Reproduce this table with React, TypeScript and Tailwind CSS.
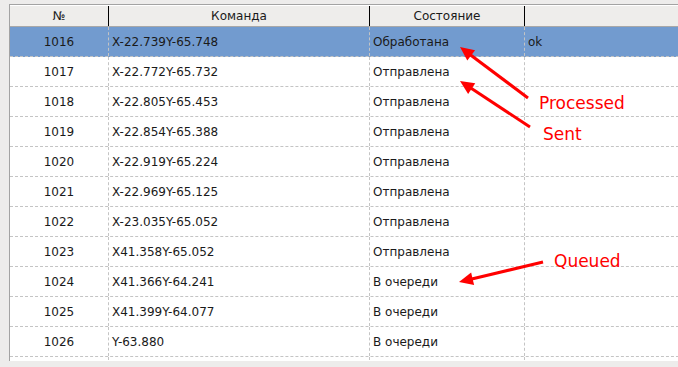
import React from "react";

const rows: [string, string, string, string][] = [
  ["1016", "X-22.739Y-65.748", "Обработана", "ok"],
  ["1017", "X-22.772Y-65.732", "Отправлена", ""],
  ["1018", "X-22.805Y-65.453", "Отправлена", ""],
  ["1019", "X-22.854Y-65.388", "Отправлена", ""],
  ["1020", "X-22.919Y-65.224", "Отправлена", ""],
  ["1021", "X-22.969Y-65.125", "Отправлена", ""],
  ["1022", "X-23.035Y-65.052", "Отправлена", ""],
  ["1023", "X41.358Y-65.052", "Отправлена", ""],
  ["1024", "X41.366Y-64.241", "В очереди", ""],
  ["1025", "X41.399Y-64.077", "В очереди", ""],
  ["1026", "Y-63.880", "В очереди", ""],
  ["", "", "", ""],
];

function Arrow({ x1, y1, x2, y2 }: { x1: number; y1: number; x2: number; y2: number }) {
  const dx = x2 - x1;
  const dy = y2 - y1;
  const len = Math.hypot(dx, dy);
  const ux = dx / len;
  const uy = dy / len;
  const hl = 14;
  const hw = 6.5;
  const bx = x2 - ux * hl;
  const by = y2 - uy * hl;
  const p1 = `${x2},${y2}`;
  const p2 = `${bx - uy * hw},${by + ux * hw}`;
  const p3 = `${bx + uy * hw},${by - ux * hw}`;
  return (
    <g>
      <line x1={x1} y1={y1} x2={bx + ux * 2} y2={by + uy * 2} stroke="#ff0000" strokeWidth={3} />
      <polygon points={`${p1} ${p2} ${p3}`} fill="#ff0000" />
    </g>
  );
}

export default function App() {
  return (
    <div
      className="relative w-[678px] h-[367px] overflow-hidden bg-[#edeceb] text-[12px] text-[#1a1a1a]"
      style={{ fontFamily: '"DejaVu Sans", sans-serif' }}
    >
      <div className="ml-[9px] mt-[4px] h-[357px] overflow-hidden border-l border-t border-[#a3a3a3] bg-white w-[700px]">
        <div className="grid grid-cols-[99px_261px_155px_1fr] h-[22px] bg-[#eeedeb] border-b border-[#a8a8a8] border-t border-t-white">
          <div className="flex items-center justify-center border-r border-black">№</div>
          <div className="flex items-center justify-center border-r border-black">Команда</div>
          <div className="flex items-center justify-center border-r border-black">Состояние</div>
          <div></div>
        </div>
        {rows.map((r, i) => (
          <div
            key={i}
            className={`grid grid-cols-[99px_261px_155px_1fr] h-[30px] border-b border-dashed border-[#c4c4c4] ${
              i === 0 ? "bg-[#729bcf]" : "bg-white"
            }`}
          >
            <div className="flex items-center justify-center border-r border-l border-dashed border-[#c4c4c4] -ml-px">{r[0]}</div>
            <div className="flex items-center pl-[3px] border-r border-dashed border-[#c4c4c4]">{r[1]}</div>
            <div className="flex items-center pl-[3px] border-r border-dashed border-[#c4c4c4]">{r[2]}</div>
            <div className="flex items-center pl-[3px]">{r[3]}</div>
          </div>
        ))}
      </div>

      <svg className="absolute left-0 top-0" width={678} height={367}>
        <Arrow x1={528} y1={98} x2={460} y2={47} />
        <Arrow x1={530} y1={127} x2={460} y2={81} />
        <Arrow x1={543} y1={262} x2={459} y2={282} />
      </svg>
      <div className="absolute left-[539px] top-[92px] text-[17px] leading-[22px] text-[#ff0000]">Processed</div>
      <div className="absolute left-[543px] top-[123px] text-[17px] leading-[22px] text-[#ff0000]">Sent</div>
      <div className="absolute left-[554px] top-[250px] text-[17px] leading-[22px] text-[#ff0000]">Queued</div>
    </div>
  );
}
